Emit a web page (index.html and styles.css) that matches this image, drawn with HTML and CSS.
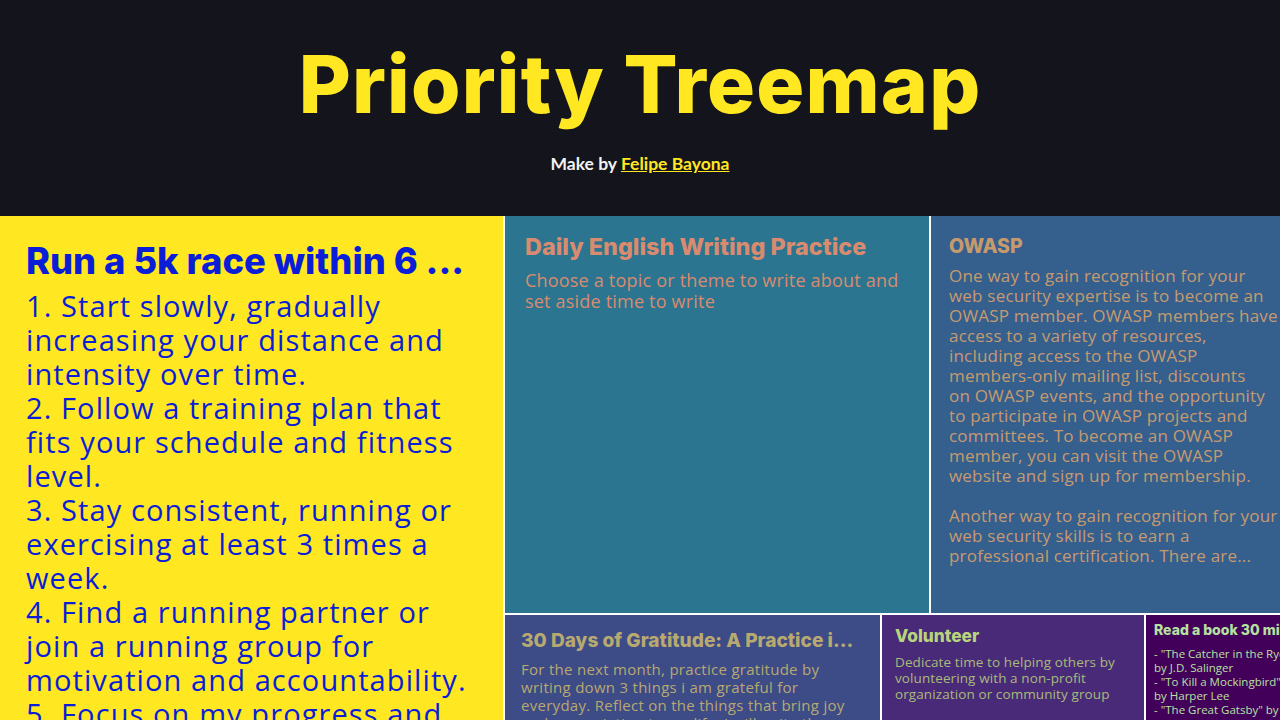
FILE: index.html
```html
<!DOCTYPE html>
<html>
<head>
<meta charset="utf-8" />
<title>Priority Treemap</title>
<link rel="stylesheet" href="styles.css">
</head>
<body>
<header class="top">
  <h1 class="top-title">Priority Treemap</h1>
  <p class="top-by">Make by <a href="#">Felipe Bayona</a></p>
</header>
<main class="map">
  <section class="tile tile-run">
    <h2>Run a 5k race within 6 ...</h2>
    <p>1. Start slowly, gradually<br>increasing your distance and<br>intensity over time.<br>2. Follow a training plan that<br>fits your schedule and fitness<br>level.<br>3. Stay consistent, running or<br>exercising at least 3 times a<br>week.<br>4. Find a running partner or<br>join a running group for<br>motivation and accountability.<br>5. Focus on my progress and</p>
  </section>
  <div class="map-side">
    <div class="map-row map-row-top">
      <section class="tile tile-english">
        <h2>Daily English Writing Practice</h2>
        <p>Choose a topic or theme to write about and<br>set aside time to write</p>
      </section>
      <section class="tile tile-owasp">
        <h2>OWASP</h2>
        <p>One way to gain recognition for your<br>web security expertise is to become an<br>OWASP member. OWASP members have<br>access to a variety of resources,<br>including access to the OWASP<br>members-only mailing list, discounts<br>on OWASP events, and the opportunity<br>to participate in OWASP projects and<br>committees. To become an OWASP<br>member, you can visit the OWASP<br>website and sign up for membership.<br><br>Another way to gain recognition for your<br>web security skills is to earn a<br>professional certification. There are...</p>
      </section>
    </div>
    <div class="map-row map-row-bottom">
      <section class="tile tile-gratitude">
        <h2>30 Days of Gratitude: A Practice i...</h2>
        <p>For the next month, practice gratitude by<br>writing down 3 things i am grateful for<br>everyday. Reflect on the things that bring joy<br>and appreciation to my life. I will write the</p>
      </section>
      <section class="tile tile-volunteer">
        <h2>Volunteer</h2>
        <p>Dedicate time to helping others by<br>volunteering with a non-profit<br>organization or community group</p>
      </section>
      <section class="tile tile-book">
        <h2>Read a book 30 minutes a day</h2>
        <p>- "The Catcher in the Rye"<br>by J.D. Salinger<br>- "To Kill a Mockingbird"<br>by Harper Lee<br>- "The Great Gatsby" by F. Scott</p>
      </section>
    </div>
  </div>
</main>
</body>
</html>
```

FILE: styles.css
```css
html, body {margin: 0; height: 720px; overflow: hidden; background: #fff;}
body {font-family: "Open Sans", "Noto Sans", sans-serif;}
h1, h2, p {margin: 0;}

.top {height: 216px; background: #14141c; display: flex; flex-direction: column; align-items: center; box-sizing: border-box; padding-top: 34px;}
.top-title {font-family: Inter, sans-serif; font-weight: 800; font-size: 80px; line-height: 100px; letter-spacing: 1.2px; color: #ffe721;}
.top-by {margin-top: 20px; font-family: Lato, sans-serif; font-weight: 700; font-size: 17.5px; line-height: 20px; color: #f2f2f2;}
.top-by a {color: #ffe721;}

.map {display: flex; gap: 2px; width: 1280px; height: 504px; overflow: hidden;}
.map-side {display: flex; flex: none; flex-direction: column; gap: 2px; width: 895px;}
.map-row {display: flex; flex: none; gap: 2px;}
.map-row-top {height: 397px;}
.map-row-bottom {height: 105px;}

.tile {flex: none; box-sizing: border-box; overflow: hidden; white-space: nowrap;}
.tile h2 {font-family: Inter, sans-serif; font-weight: 800;}

.tile-run {width: 503px; height: 504px; padding: 24px 26px; background: #ffe721; color: #0a1ed8;}
.tile-run h2 {font-size: 36.3px; line-height: 42px;}
.tile-run p {margin-top: 7px; font-size: 29px; line-height: 34px; letter-spacing: 1.1px;}

.tile-english {width: 424px; padding: 16px 20px; background: #2b7590; color: #d98b6f;}
.tile-english h2 {font-size: 23.4px; line-height: 30px;}
.tile-english p {margin-top: 8px; font-size: 18px; line-height: 21px; letter-spacing: 0.2px;}

.tile-owasp {width: 400px; padding: 16px 18px; background: #35608e; color: #c79a6e;}
.tile-owasp h2 {font-size: 19.5px; line-height: 28px;}
.tile-owasp p {margin-top: 6px; font-size: 17px; line-height: 20px; letter-spacing: 0.2px;}

.tile-gratitude {width: 375px; padding: 12px 16px; background: #3d4b87; color: #b8a970;}
.tile-gratitude h2 {font-size: 19.1px; line-height: 26px;}
.tile-gratitude p {margin-top: 7px; font-size: 15px; line-height: 18px; letter-spacing: 0.28px;}

.tile-volunteer {width: 262px; padding: 9px 13px; background: #482a78; color: #a9bb78;}
.tile-volunteer h2 {font-size: 17.3px; line-height: 24px; color: #b9d47c;}
.tile-volunteer p {margin-top: 6px; font-size: 13.5px; line-height: 16px; letter-spacing: 0.1px;}

.tile-book {width: 300px; padding: 5px 8px; background: #42005a; color: #b5e0a0;}
.tile-book h2 {font-size: 14px; line-height: 20px;}
.tile-book p {margin-top: 7px; font-size: 11.5px; line-height: 14px;}
```
